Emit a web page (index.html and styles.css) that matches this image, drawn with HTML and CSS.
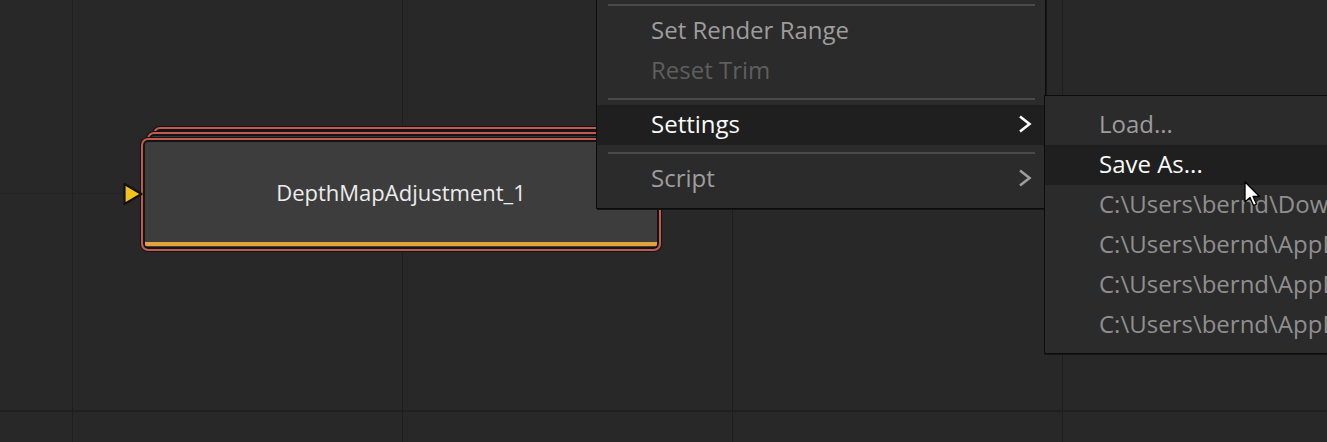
FILE: index.html
```html
<!DOCTYPE html>
<html lang="en">
<head>
    <meta charset="UTF-8">
    <meta name="viewport" content="width=device-width, initial-scale=1.0">
    <title>Flow</title>
    <link rel="stylesheet" href="styles.css">
</head>
<body>
    <div class="flow">
        <div class="node">
            <div class="layer back2"></div>
            <div class="layer back1"></div>
            <div class="layer front">
                <span class="node-name">DepthMapAdjustment_1</span>
            </div>
            <svg class="input" width="20" height="24" viewBox="0 0 20 24">
                <path d="M1.5 2 L18.5 12 L1.5 22 Z" fill="#f3c21c" stroke="#111" stroke-width="2.2" stroke-linejoin="round"/>
            </svg>
        </div>

        <div class="menu">
            <div class="sep"></div>
            <div class="item">Set Render Range</div>
            <div class="item disabled">Reset Trim</div>
            <div class="sep"></div>
            <div class="item active">Settings
                <svg class="arrow" width="14" height="18" viewBox="0 0 14 18"><path d="M2 1.5 L11.5 9 L2 16.5" fill="none" stroke="currentColor" stroke-width="2.6"/></svg>
            </div>
            <div class="sep"></div>
            <div class="item">Script
                <svg class="arrow" width="14" height="18" viewBox="0 0 14 18"><path d="M2 1.5 L11.5 9 L2 16.5" fill="none" stroke="currentColor" stroke-width="2.6"/></svg>
            </div>
        </div>

        <div class="submenu">
            <div class="item">Load...</div>
            <div class="item active">Save As...</div>
            <div class="item path">C:\Users\bernd\Downloads\DepthMapAdjustment.setting</div>
            <div class="item path">C:\Users\bernd\AppData\Roaming\Blackmagic Design</div>
            <div class="item path">C:\Users\bernd\AppData\Roaming\Blackmagic Design</div>
            <div class="item path">C:\Users\bernd\AppData\Roaming\Blackmagic Design</div>
        </div>

        <svg class="cursor" width="20" height="28" viewBox="0 0 20 28">
            <path d="M1 1 L1 21 L6 16.5 L9.5 24.5 L12.5 23 L9 15.5 L15.5 15.5 Z" fill="#fff" stroke="#000" stroke-width="1.3" stroke-linejoin="round"/>
        </svg>
    </div>
</body>
</html>
```

FILE: styles.css
```css
body {
    margin: 0;
    background-color: #282828;
    font-family: "Open Sans", "Noto Sans", sans-serif;
    overflow: hidden;
}

.flow {
    position: relative;
    width: 1327px;
    height: 442px;
    background-color: #282828;
    background-image:
        linear-gradient(to right, transparent 72px, #1e1e1e 72px, #1e1e1e 73px, transparent 73px,
            transparent 402px, #1e1e1e 402px, #1e1e1e 403px, transparent 403px,
            transparent 732px, #1e1e1e 732px, #1e1e1e 733px, transparent 733px,
            transparent 1062px, #1e1e1e 1062px, #1e1e1e 1063px, transparent 1063px),
        linear-gradient(to bottom, transparent 193px, #222 193px, #222 194px, transparent 194px,
            transparent 410px, #1f1f1f 410px, #1f1f1f 412px, transparent 412px);
}

/* node */
.node {
    position: absolute;
    left: 123px;
    top: 126px;
    width: 540px;
    height: 126px;
}

.layer {
    position: absolute;
    box-sizing: border-box;
    border: 2px solid #c25a52;
    border-radius: 7px;
    box-shadow: inset 0 0 0 2px #141414, 0 0 0 1px #141414;
}

.back2 {
    left: 30px;
    top: 1px;
    width: 506px;
    height: 40px;
    background-color: #383838;
}

.back1 {
    left: 24px;
    top: 6px;
    width: 512px;
    height: 40px;
    background-color: #383838;
}

.front {
    left: 18px;
    top: 12px;
    width: 520px;
    height: 113px;
    background-color: #3d3d3d;
    display: flex;
    align-items: center;
    justify-content: center;
    padding-bottom: 5px;
    background-image: linear-gradient(to top, transparent 3px, #e4a23c 3px, #e4a23c 7px, transparent 7px);
}

.node-name {
    color: #ececec;
    font-size: 22px;
}

.input {
    position: absolute;
    left: 0;
    top: 56px;
}

/* menus */
.menu,
.submenu {
    position: absolute;
    background-color: #2b2b2b;
    border: 1px solid #0c0c0c;
    box-shadow: 1px 1px 0 #151515;
}

.menu {
    left: 596px;
    top: -8px;
    width: 448px;
    padding: 8px 0 9px;
}

.submenu {
    left: 1044px;
    top: 95px;
    width: 320px;
    padding: 9px 0 8px;
}

.item {
    position: relative;
    height: 40px;
    line-height: 38px;
    padding-left: 54px;
    font-size: 24px;
    color: #9d9d9d;
    white-space: nowrap;
}

.submenu .item {
    overflow: hidden;
}

.item.path {
    color: #8f8f8f;
}

.item.disabled {
    color: #5e5e5e;
}

.item.active {
    color: #fafafa;
    background-color: #1f1f1f;
}

.sep {
    height: 2px;
    margin: 7px 10px 5px 11px;
    background-color: #4a4a4a;
}

.menu .sep:first-child {
    margin-top: 3px;
}

.arrow {
    position: absolute;
    right: 13px;
    top: 10px;
}

.cursor {
    position: absolute;
    left: 1244px;
    top: 181px;
}
```
